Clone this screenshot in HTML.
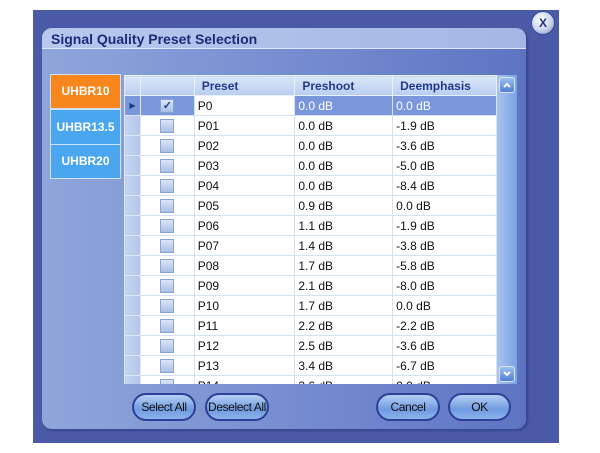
<!DOCTYPE html>
<html><head><style>
*{margin:0;padding:0;box-sizing:border-box}
body{width:600px;height:453px;background:#fff;position:relative;overflow:hidden;font-family:"Liberation Sans",sans-serif}
.frame{position:absolute;left:33px;top:10px;width:526px;height:433px;background:#4a5aa6}
.panel{position:absolute;left:42px;top:28px;width:484px;height:401px;border-radius:10px;background:linear-gradient(90deg,#8fa6da,#7289cf 60%,#5d74c2);box-shadow:2px 2px 2px #3a4690}
.title{position:absolute;left:42px;top:28px;width:484px;height:21px;border-radius:10px 10px 0 0;background:linear-gradient(90deg,#b8c8ec,#a4b7e4);border-bottom:1px solid #dfe6f7;font-weight:bold;font-size:14px;color:#1d2a7a;padding:3px 0 0 9px}
.close{position:absolute;left:531px;top:11px;width:24px;height:24px;border-radius:50%;background:radial-gradient(circle at 40% 35%,#fff,#c9d3ea 55%,#7080b8);border:1px solid #3b4a98;font-size:12px;font-weight:bold;color:#233080;text-align:center;line-height:22px}
.tab{position:absolute;left:50px;width:71px;color:#fff;font-weight:bold;font-size:12px;text-align:center;border:1px solid #cfe0f7}
.grid{position:absolute;left:124px;top:75px;width:373px;height:309px;background:#fff;overflow:hidden}
table{border-collapse:collapse;font-size:12px;color:#111}
td{height:20px;border:1px solid #d5e2f3;padding-left:3px}
th{height:20px;background:linear-gradient(#d9e6f8,#b9cdef);border:1px solid #e8f0fb;color:#223a8a;font-size:12px;text-align:left;padding-left:7px}
td.rh{background:linear-gradient(90deg,#c6d5ef,#b2c6eb);width:16px;padding:0;border-color:#dde7f6}
td.cb{width:54px;text-align:center;padding:0}
.box{display:inline-block;width:14px;height:14px;border:1px solid #8aa3d3;background:linear-gradient(#dbe6f7,#a8bfe6);vertical-align:middle;font-size:11px;line-height:12px;color:#223a8a;font-weight:bold}
tr.sel td{background:#7b97dc;color:#fff}
tr.sel td.p{background:#fff;color:#111}
.sb{position:absolute;left:497px;top:75px;width:20px;height:309px;background:linear-gradient(90deg,#a9c4ee,#7aa2e2)}
.arr{position:absolute;left:499px;width:16px;height:16px;border-radius:3px;background:linear-gradient(#9fc0f0,#4f7fd4);border:1px solid #d8e6fa}
.btn{position:absolute;top:393px;height:28px;border:2px solid #2d3f96;border-radius:14px;background:linear-gradient(#b6d0f4,#6f9ae0 60%,#8db3ec);font-size:12px;color:#111;text-align:center;line-height:24px;white-space:nowrap;letter-spacing:-0.4px;overflow:hidden}
</style></head><body>
<div class="frame"></div>
<div class="panel"></div>
<div class="title">Signal Quality Preset Selection</div>
<div class="close">X</div>
<div class="tab" style="top:74px;height:35px;background:#f7871c;line-height:33px">UHBR10</div>
<div class="tab" style="top:109px;height:36px;background:#4aa6ef;line-height:34px">UHBR13.5</div>
<div class="tab" style="top:144px;height:35px;background:#4aa6ef;line-height:33px">UHBR20</div>
<div class="grid"><table>
<tr><th style="width:16px;padding:0"></th><th style="width:54px"></th><th style="width:101px">Preset</th><th style="width:98px">Preshoot</th><th style="width:104px">Deemphasis</th></tr>
<tr class="sel"><td class="rh" style="color:#223a8a;font-size:8px;text-align:center">▶</td><td class="cb"><span class="box">✓</span></td><td class="p">P0</td><td>0.0 dB</td><td>0.0 dB</td></tr>
<tr><td class="rh"></td><td class="cb"><span class="box"></span></td><td>P01</td><td>0.0 dB</td><td>-1.9 dB</td></tr>
<tr><td class="rh"></td><td class="cb"><span class="box"></span></td><td>P02</td><td>0.0 dB</td><td>-3.6 dB</td></tr>
<tr><td class="rh"></td><td class="cb"><span class="box"></span></td><td>P03</td><td>0.0 dB</td><td>-5.0 dB</td></tr>
<tr><td class="rh"></td><td class="cb"><span class="box"></span></td><td>P04</td><td>0.0 dB</td><td>-8.4 dB</td></tr>
<tr><td class="rh"></td><td class="cb"><span class="box"></span></td><td>P05</td><td>0.9 dB</td><td>0.0 dB</td></tr>
<tr><td class="rh"></td><td class="cb"><span class="box"></span></td><td>P06</td><td>1.1 dB</td><td>-1.9 dB</td></tr>
<tr><td class="rh"></td><td class="cb"><span class="box"></span></td><td>P07</td><td>1.4 dB</td><td>-3.8 dB</td></tr>
<tr><td class="rh"></td><td class="cb"><span class="box"></span></td><td>P08</td><td>1.7 dB</td><td>-5.8 dB</td></tr>
<tr><td class="rh"></td><td class="cb"><span class="box"></span></td><td>P09</td><td>2.1 dB</td><td>-8.0 dB</td></tr>
<tr><td class="rh"></td><td class="cb"><span class="box"></span></td><td>P10</td><td>1.7 dB</td><td>0.0 dB</td></tr>
<tr><td class="rh"></td><td class="cb"><span class="box"></span></td><td>P11</td><td>2.2 dB</td><td>-2.2 dB</td></tr>
<tr><td class="rh"></td><td class="cb"><span class="box"></span></td><td>P12</td><td>2.5 dB</td><td>-3.6 dB</td></tr>
<tr><td class="rh"></td><td class="cb"><span class="box"></span></td><td>P13</td><td>3.4 dB</td><td>-6.7 dB</td></tr>
<tr><td class="rh"></td><td class="cb"><span class="box"></span></td><td>P14</td><td>3.6 dB</td><td>0.0 dB</td></tr>
</table></div>
<div class="sb"></div>
<div class="arr" style="top:77px"><svg width="14" height="14" viewBox="0 0 14 14"><path d="M4 9 L7 6 L10 9" stroke="#fff" stroke-width="2" fill="none"/></svg></div>
<div class="arr" style="top:366px"><svg width="14" height="14" viewBox="0 0 14 14"><path d="M4 5 L7 8 L10 5" stroke="#fff" stroke-width="2" fill="none"/></svg></div>
<div class="btn" style="left:132px;width:64px">Select All</div>
<div class="btn" style="left:205px;width:64px">Deselect All</div>
<div class="btn" style="left:376px;width:64px">Cancel</div>
<div class="btn" style="left:448px;width:63px">OK</div>
</body></html>
